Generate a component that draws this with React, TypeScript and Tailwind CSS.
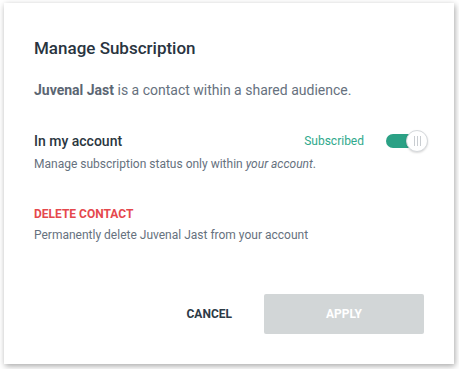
export default function App() {
  return (
    <div className="w-[459px] h-[369px] bg-white p-[3px_5px_5px_4px] font-['Roboto',sans-serif]">
      <div className="h-[361px] bg-white shadow-[1px_2px_6px_rgba(0,0,0,0.35)] pl-[30px] pr-[30px] pt-[33px] flex flex-col">
        <h2 className="text-[17px] leading-6 font-medium text-[#29343f]">Manage Subscription</h2>

        <p className="mt-[20px] text-[14px] leading-5 text-[#66717e]">
          <span className="font-bold text-[#5b6673]">Juvenal Jast</span> is a contact within a shared audience.
        </p>

        <div className="mt-[30px] flex items-center justify-between">
          <span className="text-[14px] leading-5 font-medium text-[#2b3640]">In my account</span>
          <div className="flex items-center gap-[22px] -mr-[4px]">
            <span className="text-[12px] text-[#2fa98c]">Subscribed</span>
            <div className="relative w-[42px] h-[22px] flex items-center">
              <div className="w-[34px] h-[14px] rounded-full bg-[#2ba185]" />
              <div className="absolute right-0 top-0 w-[22px] h-[22px] rounded-full bg-white border border-[#d6d9dc] shadow-[0_1px_2px_rgba(0,0,0,0.15)] flex items-center justify-center gap-[2px]">
                <span className="w-px h-[10px] bg-[#c9cdd1]" />
                <span className="w-px h-[10px] bg-[#c9cdd1]" />
                <span className="w-px h-[10px] bg-[#c9cdd1]" />
              </div>
            </div>
          </div>
        </div>
        <p className="mt-[4px] text-[12px] leading-4 text-[#66717e]">
          Manage subscription status only within <em>your account</em>.
        </p>

        <div className="mt-[34px] text-[12px] leading-4 font-bold text-[#e5484d]">DELETE CONTACT</div>
        <p className="mt-[5px] text-[12px] leading-4 text-[#66717e]">Permanently delete Juvenal Jast from your account</p>

        <div className="mt-auto mb-[30px] flex items-center justify-end">
          <button className="text-[12px] font-bold text-[#2d3a46] mr-[32px]">CANCEL</button>
          <button className="w-[160px] h-[40px] rounded-[2px] bg-[#d2d6d7] text-[12px] font-bold text-white">APPLY</button>
        </div>
      </div>
    </div>
  );
}
